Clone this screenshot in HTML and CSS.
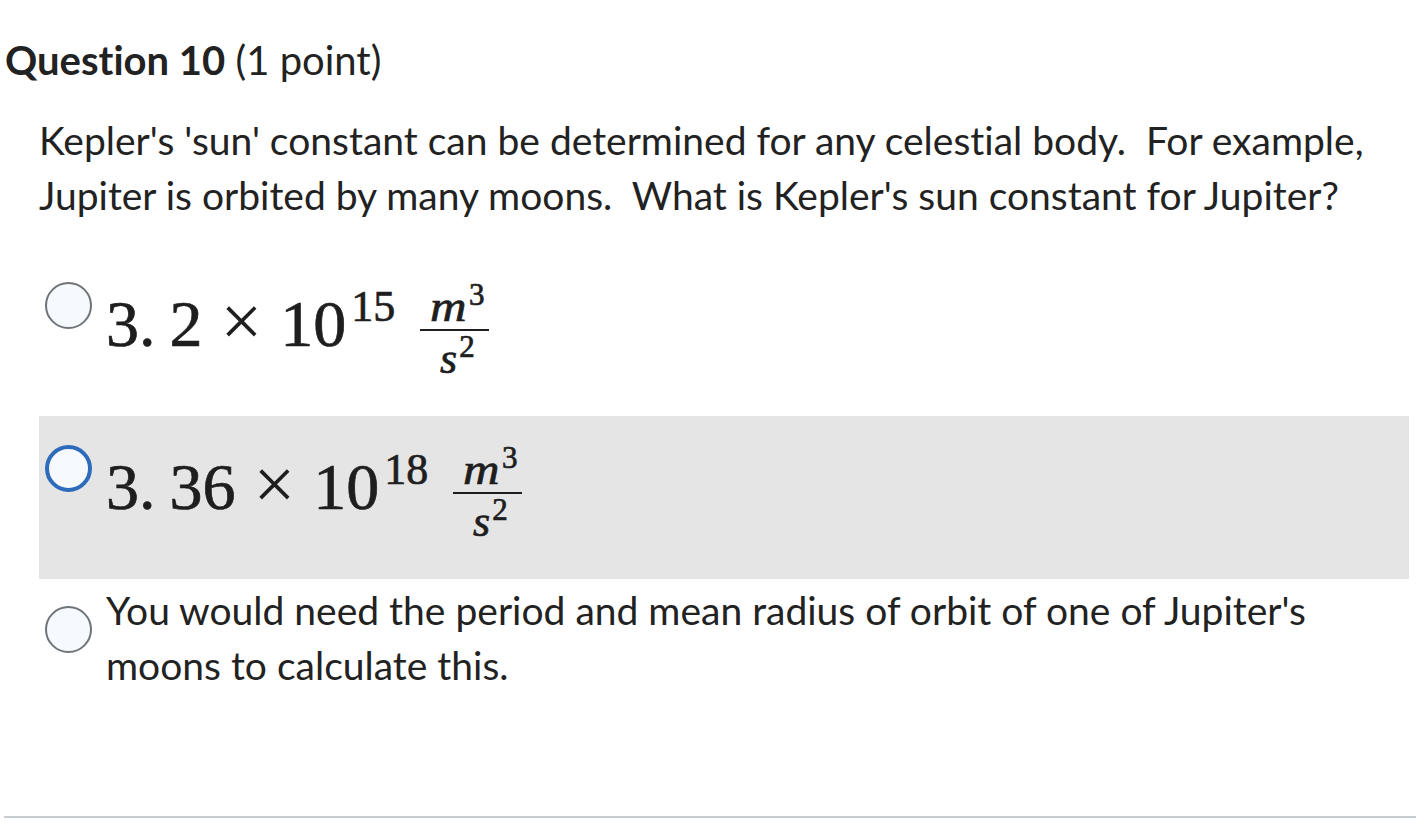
FILE: index.html
```html
<!DOCTYPE html>
<html lang="en">
<head>
<meta charset="utf-8">
<title>Question 10</title>
<link rel="stylesheet" href="styles.css">
</head>
<body>
<div class="page">
  <div class="question">
    <h2 class="q-title"><span class="q-num">Question 10</span> (1 point)</h2>
    <div class="q-body">
      <p class="q-text">Kepler's 'sun' constant can be determined for any celestial body.&nbsp; For example, Jupiter is orbited by many moons.&nbsp; What is Kepler's sun constant for Jupiter?</p>
      <div class="options">
        <label class="option opt-1">
          <span class="radio"></span>
          <span class="math">
            <span class="mn">3.</span><span class="mn sp">2</span><span class="mo">×</span><span class="mn">10</span><span class="msup">15</span><span class="frac"><span class="num"><i>m</i><span class="ssup">3</span></span><span class="den"><i>s</i><span class="ssup">2</span></span></span>
          </span>
        </label>
        <label class="option opt-2 hover">
          <span class="radio focus"></span>
          <span class="math">
            <span class="mn">3.</span><span class="mn sp">36</span><span class="mo">×</span><span class="mn">10</span><span class="msup">18</span><span class="frac"><span class="num"><i>m</i><span class="ssup">3</span></span><span class="den"><i>s</i><span class="ssup">2</span></span></span>
          </span>
        </label>
        <label class="option opt-3">
          <span class="radio"></span>
          <span class="opt-text">You would need the period and mean radius of orbit of one of Jupiter's moons to calculate this.</span>
        </label>
      </div>
    </div>
  </div>
  <hr class="divider">
</div>
</body>
</html>
```

FILE: styles.css
```css
html, body {
  margin: 0;
  padding: 0;
  background: #ffffff;
}

body {
  font-family: Lato, "Liberation Sans", sans-serif;
  color: #222222;
  font-variant-ligatures: none;
}

.page {
  width: 1426px;
  height: 829px;
  overflow: hidden;
}

.question {
  padding: 36px 0 0 5px;
}

.q-title {
  margin: 0;
  font-size: 40px;
  line-height: 48px;
  font-weight: 400;
  color: #222222;
}

.q-num {
  font-weight: 700;
}

.q-body {
  padding: 29px 0 0 34px;
  width: 1370px;
}

.q-text {
  margin: 0;
  font-size: 39px;
  line-height: 55px;
  width: 1360px;
}

.options {
  display: flex;
  flex-direction: column;
  margin-top: 30px;
}

.option {
  display: flex;
  align-items: flex-start;
  gap: 14px;
  padding: 29px 0 0 6px;
  box-sizing: border-box;
  height: 163px;
}

.option.hover {
  background: #e5e5e5;
}

.opt-3 {
  padding-top: 27px;
  height: auto;
}

.radio {
  flex: none;
  width: 47px;
  height: 47px;
  box-sizing: border-box;
  border-radius: 50%;
  border: 2px solid #6f7478;
  background: #f6f9fe;
}

.radio.focus {
  border: 4px solid #2e6cbb;
}

.math {
  font-family: "Liberation Serif", "DejaVu Serif", serif;
  font-size: 66px;
  line-height: 1;
  white-space: nowrap;
  margin-top: -3px;
  color: #1e1e1e;
  -webkit-text-stroke: 0.7px #1e1e1e;
}

.mn.sp {
  margin-left: 14px;
}

.mo {
  font-size: 74px;
  line-height: 0;
  margin: 0 18px 0 18px;
  -webkit-text-stroke: 0;
}

.msup {
  font-size: 44px;
  vertical-align: 25px;
  margin-left: 5px;
}

.frac {
  display: inline-flex;
  flex-direction: column;
  align-items: center;
  vertical-align: 25px;
  font-size: 44px;
  margin-left: 25px;
}

.num {
  border-bottom: 2px solid #1e1e1e;
  padding: 0 4px 0 10px;
  line-height: 1;
}

.num i {
  display: inline-block;
  transform: scaleX(1.15);
  transform-origin: left center;
  margin-right: 5px;
}

.den {
  line-height: 1;
  padding-left: 6px;
}

.frac i {
  font-style: italic;
}

.ssup {
  font-size: 31px;
  vertical-align: 16px;
  margin-left: 2px;
}

.opt-text {
  font-size: 39px;
  line-height: 55px;
  margin-top: -23px;
  width: 1290px;
}

.divider {
  margin: 123px 0 0 4px;
  border: 0;
  height: 2px;
  background: #c7cdd1;
  width: 1412px;
}
```
